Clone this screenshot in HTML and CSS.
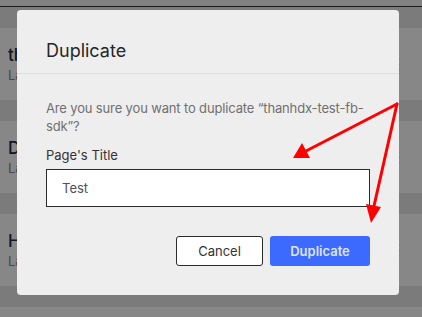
FILE: index.html
```html
<!DOCTYPE html>
<html lang="en">
<head>
    <meta charset="UTF-8">
    <meta name="viewport" content="width=device-width, initial-scale=1.0">
    <title>Pages</title>
    <link rel="stylesheet" href="styles.css">
</head>
<body>
    <div class="topbar"></div>

    <div class="page-list">
        <div class="page-row">
            <div class="page-info">
                <div class="page-name">thanhdx-test-fb-sdk</div>
                <div class="page-meta">Last updated 2 days ago</div>
            </div>
            <div class="page-more">&#8942;</div>
        </div>
        <div class="page-row">
            <div class="page-info">
                <div class="page-name">Duplicate of landing</div>
                <div class="page-meta">Last updated 5 days ago</div>
            </div>
            <div class="page-more">&#8942;</div>
        </div>
        <div class="page-row">
            <div class="page-info">
                <div class="page-name">Home page</div>
                <div class="page-meta">Last updated 1 week ago</div>
            </div>
            <div class="page-more">&#8942;</div>
        </div>
        <div class="page-row page-row-last"></div>
    </div>

    <!-- Duplicate dialog -->
    <div class="overlay">
        <div class="modal">
            <div class="modal-header">Duplicate</div>
            <div class="modal-body">
                <p class="modal-text">Are you sure you want to duplicate “thanhdx-test-fb-sdk”?</p>
                <label for="pageTitle" class="field-label">Page's Title</label>
                <input id="pageTitle" class="field-input" value="Test">
                <div class="modal-actions">
                    <button class="btn btn-cancel">Cancel</button>
                    <button class="btn btn-primary">Duplicate</button>
                </div>
            </div>
        </div>
    </div>

    <!-- annotation arrows -->
    <svg class="arrows" width="422" height="317" viewBox="0 0 422 317">
        <g stroke="#ff0000" stroke-width="3" fill="none" stroke-linecap="round">
            <line x1="397" y1="104" x2="306" y2="151" />
            <line x1="397" y1="104" x2="374" y2="206" />
        </g>
        <g fill="#ff0000">
            <polygon points="293,158 302,143 310,158" />
            <polygon points="371,223 366,204 381,207" />
        </g>
    </svg>
</body>
</html>
```

FILE: styles.css
```css
html, body {
    overflow: hidden;
}

body {
    margin: 0;
    padding: 0;
    font-family: 'Inter', 'Noto Sans', sans-serif;
    background-color: #e9e9e9;
    width: 422px;
    height: 317px;
}

.topbar {
    height: 6px;
    background-color: #f4f4f4;
    border-bottom: 1px solid #333;
}

.page-list {
    padding-top: 21px;
    display: flex;
    flex-direction: column;
    gap: 21px;
}

.page-row {
    height: 72px;
    background-color: #ffffff;
    display: flex;
    align-items: center;
    justify-content: space-between;
    padding: 0 16px 0 8px;
}

.page-row-last {
    height: 10px;
}

.page-name {
    font-size: 17px;
    color: #1d2b4a;
    font-weight: 500;
}

.page-meta {
    font-size: 13px;
    color: #888;
    margin-top: 2px;
}

.page-more {
    font-size: 16px;
    color: #555;
}

.overlay {
    position: fixed;
    inset: 0;
    background-color: rgba(0, 0, 0, 0.47);
}

.modal {
    position: absolute;
    left: 17px;
    top: 10px;
    width: 382px;
    height: 285px;
    background-color: #eeeeee;
    border-radius: 4px;
}

.modal-header {
    height: 64px;
    box-sizing: border-box;
    padding: 30px 29px 0;
    font-size: 18px;
    line-height: 22px;
    color: #262626;
    border-bottom: 1px solid #dedede;
}

.modal-body {
    padding: 25px 29px 29px;
}

.modal-text {
    margin: 0;
    font-size: 13px;
    line-height: 18px;
    letter-spacing: -0.15px;
    color: #707070;
}

.field-label {
    display: block;
    margin-top: 11px;
    font-size: 13px;
    color: #333;
    line-height: 18px;
}

.field-input {
    display: block;
    width: 100%;
    height: 38px;
    margin-top: 5px;
    padding: 0 15px;
    border: 1px solid #2b2b2b;
    border-radius: 0;
    background-color: #fff;
    font-family: inherit;
    font-size: 13px;
    color: #4d5060;
    box-sizing: border-box;
}

.modal-actions {
    display: flex;
    justify-content: flex-end;
    gap: 7px;
    margin-top: 29px;
}

.btn {
    height: 30px;
    border-radius: 3px;
    font-family: inherit;
    font-size: 13px;
    cursor: pointer;
}

.btn-cancel {
    width: 87px;
    background-color: #fff;
    border: 1px solid #2b2b2b;
    color: #333;
}

.btn-primary {
    width: 100px;
    background-color: #3d6afe;
    border: none;
    color: #dde3fb;
    font-weight: 600;
}

.arrows {
    position: absolute;
    left: 0;
    top: 0;
}
```
